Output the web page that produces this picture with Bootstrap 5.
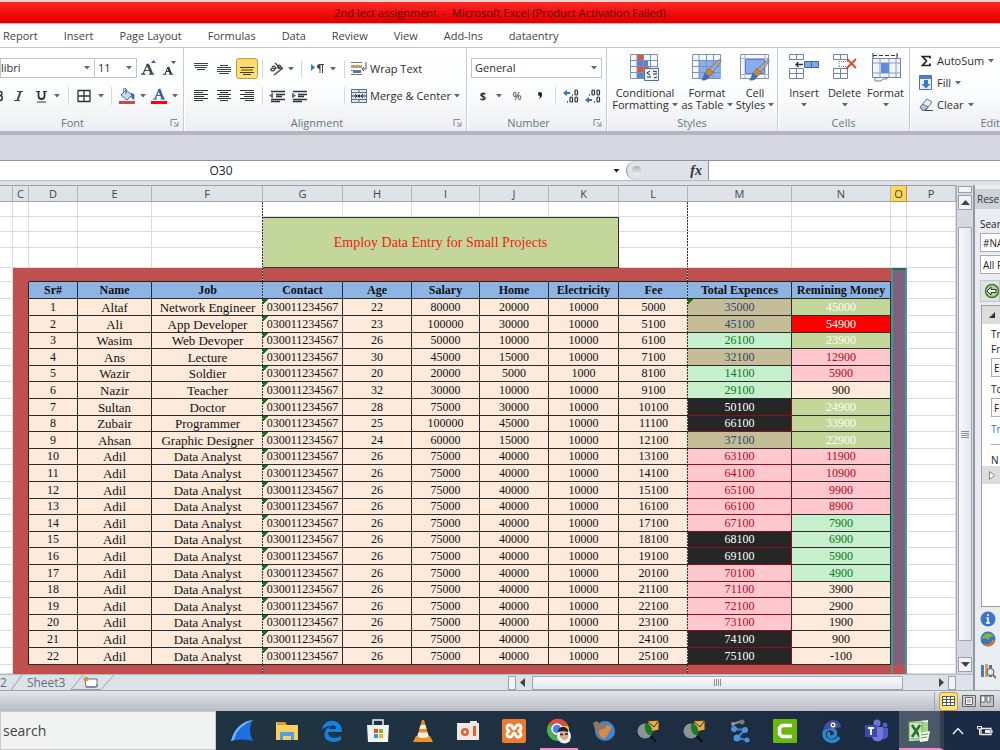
<!DOCTYPE html>
<html lang="en">
<head>
<meta charset="utf-8">
<meta name="viewport" content="width=device-width, initial-scale=1">
<title>2nd lect assignment - Microsoft Excel</title>
<link href="https://cdn.jsdelivr.net/npm/bootstrap@5.3.0/dist/css/bootstrap.min.css" rel="stylesheet">
<style>
body{font-family:"Open Sans","Noto Sans",sans-serif;font-size:11px;line-height:12px;color:#2e2e2e;background:#fff;min-height:100vh;overflow-x:hidden}
button,input,select{font:inherit;color:inherit;border-radius:0}
button{border:0;background:none;padding:0}
svg{display:block;flex:none}
.titlebar{height:24px;background:linear-gradient(#ff2a26,#ee0a0a 60%,#dc0000);border-top:2px solid #f3d3cd;border-bottom:1px solid #f0a39d;color:#5c0505;white-space:pre}
.tabstrip{height:23px;gap:26px;padding-left:3px;background:#fff}
.tabstrip a{color:#444;text-decoration:none}
.ribbon{height:84px;background:linear-gradient(#fff,#fbfcfd 55%,#eceef1);border-top:1px solid #c5c8cc}
.grp{border-right:1px solid #c9ccd1;box-shadow:1px 0 #fff;padding-top:10px;overflow:hidden}
.g-font{width:184px}.g-align{width:283px}.g-num{width:140px}.g-styles{width:171px}.g-cells{width:132px}
.tools{display:grid;height:20px;margin-bottom:8px;align-items:center;justify-items:center}
.caption{height:16px;color:#6b7482;margin-top:auto}
.caption>span{flex:1;text-align:center}
.caption svg{width:16px}
.g-font .caption{margin-left:-22px}
.t-font1{grid-template-columns:95px 42px 23px 20px}
.t-font2{grid-template-columns:6px 25px 20px 12px 10px 22px 11px 10px 22px 9px 23px 10px}
.t-al1{grid-template-columns:22px 23px 23px 8px 22px 6px 14px 19px 12px 10px 1fr;padding-left:6px}
.t-al2{grid-template-columns:22px 23px 23px 8px 22px 22px 29px 10px 1fr;padding-left:6px}
.t-num{grid-template-columns:22px 10px 26px 20px 10px 22px 22px;padding-left:5px}
.sep{width:1px;height:18px;background:#d5d8dc}
.field{height:20px;border:1px solid #c3c6ca;background:#fff;width:100%}
.field input,.field select{border:0;background:none;outline:0;appearance:none;flex:1;min-width:0;padding:0 3px}
.field svg{margin-right:4px}
.pressed{width:22px;height:21px;border:1px solid #c29b3d;border-radius:3px;background:linear-gradient(#fbd96f,#ffe47b);display:flex;align-items:center;justify-content:center}
.wide{justify-self:start;display:flex;align-items:center;gap:3px;padding-left:2px;white-space:nowrap}
.bigs{display:grid;margin-top:-5px}
.t-styles{grid-template-columns:72px 52px 44px;padding-left:2px}
.t-cells{grid-template-columns:40px 41px 41px;padding-left:6px}
.bigs button{display:flex;flex-direction:column;align-items:center;white-space:nowrap}
.bigs button>svg{margin-bottom:4px}
.bigs button span{display:flex;align-items:center;gap:3px;height:12px}
.edits{gap:9px;padding-left:9px;margin-top:-2px}
.edits button{display:flex;align-items:center;gap:4px;height:13px}
.underband{height:29px;border-top:4px solid #b3b6c2;background:#d5d8e1}
.formula{height:21px;border-top:1px solid #8f949c;border-bottom:1px solid #b4b9c1;background:#fff}
.namebox{width:626px}
.namebox input{width:442px;border:0;outline:0;text-align:center;font-size:12px;color:#222;padding:0}
.namebox button{margin-left:auto;padding-right:6px}
.fxzone{width:83px;background:#dfe2e8;border:1px solid #8f949c;border-width:0 1px 0 1px;border-radius:10px 0 0 10px;padding:0 6px 0 5px}
.knob{width:9px;height:9px;border-radius:50%;background:linear-gradient(#a9adb4,#f4f5f7)}
.fx{font:italic bold 14px/16px "Liberation Serif",serif;color:#333}
.formula>input{border:0;outline:0;min-width:0}
.work{background:#e7eaf0;border-top:4px solid #dde1e8}
.sheetpart{min-width:0;overflow:hidden}
.grid{table-layout:fixed;width:100%;border-collapse:separate;border-spacing:0;background:#fff;font-family:"Liberation Serif",serif;font-size:12px;line-height:15px;color:#111;text-align:center;border-top:1px solid #9aa0a9}
.grid td,.grid th{padding:0;border-right:1px solid #dadcdd;border-bottom:1px solid #dadcdd;white-space:nowrap;overflow:hidden}
.grid thead th{height:16px;font:11px/14px "Open Sans",sans-serif;background:#dfe3e8;color:#444;border-color:#9fa5ad;border-right-color:#b0b5bc}
.grid thead .now{background:#ffd65c;border-color:#c2903a}
.w13{width:13px}.w16{width:16px}.w49{width:49px}.w74{width:74px}.w111{width:111px}.w80{width:80px}.w69{width:69px}.w68{width:68px}.w70{width:70px}.w104{width:104px}.w99{width:99px}
.h15 td{height:15px}.h16 td{height:16px}.h20 td{height:20px}.h14 td{height:14px}.h9 td{height:9px}.h17 td{height:17px}
.grid .brk{border-right:0;background-image:repeating-linear-gradient(#333 0 2px,#ddd 2px 3px);background-size:1px 100%;background-position:right;background-repeat:no-repeat}
.grid .banner{background:#c4d79b;color:#f11b0e;font-size:14px;border:1px solid #333;border-left:0}
.grid .brick{background-color:#c0504d;border-color:#c0504d}
.grid .lowedge{border-bottom-color:#222}
.grid .rtedge{border-right-color:#222}
.grid .box{background-color:#fdeada;border-color:#2b2b2b}
.grid .cap{background-color:#8db4e2;font-weight:bold}
.grid .word{font-size:13px}
.grid .flag{background-image:linear-gradient(135deg,#0b7a16 4px,transparent 4px)}
.grid .tan{background-color:#c4bd97;color:#2b4870}
.grid .olive{background-color:#c4d79b;color:#fbfdf2}
.grid .good{background-color:#c6efce;color:#0b7a16}
.grid .bad{background-color:#ffc7ce;color:#b30a1c}
.grid .coal{background-color:#262626;color:#fff}
.grid .alarm{background-color:#f00;color:#fff}
.grid .wine{border-color:#8b0f18}
.grid .sel{background:#80607a;border:0 solid #3f9a9b;border-width:0 2px}
.grid .seltop{border-top:2px solid #23686c}
.grid .selend{background:#c0504d}
.vbar{flex:none;width:17px;background:#d6dae0;border-left:1px solid #a9aeb6;padding:1px 1px 2px;gap:2px}
.sbtn{flex:none;border:1px solid #9ba1aa;background:#f1f3f6;display:flex;align-items:center;justify-content:center}
.vthumb{margin:15px 0 14px;flex:1;background:linear-gradient(90deg,#f8f9fb,#e3e7ed);border:1px solid #a0a6af;border-radius:1px}
.tabrow{height:16px;background:#dce2e8;border-top:1px solid #b5bac2}
.hbar{width:46%}
.hthumb{flex:1;margin:0 36px 0 7px;align-self:stretch;background:linear-gradient(#f8f9fb,#e3e7ed);border:1px solid #a0a6af}
.sheetlink{color:#666e7a;text-decoration:none;font-size:12px}
.pane{flex:none;width:27px;overflow:hidden;border-left:2px solid #9299a3;background:#e9ecf1;color:#222;white-space:nowrap;font-size:10px}
.panehead{height:20px;margin-top:4px;background:#cdd2d9;color:#333;padding:4px 0 0 2px}
.cut{display:block;height:19px;border:1px solid #a9adb3;border-right:0;background:#fff;width:100%;padding:0 0 0 2px;appearance:none;outline:0}
.panebody{padding-left:5px}
.s3{margin-top:3px}.s6{margin-top:6px}.s9{margin-top:9px}
.back{display:block;width:100%;height:22px;border:1px solid #c2c6cc;background:#e1e1e3;padding-left:2px}
.results{margin:3px 0 0 6px;height:302px;background:#fff;border:1px solid #9b9fa6;border-right:0}
.results .strip{height:18px;background:#dcdcdc;display:flex;align-items:center;padding-left:7px}
.results .inner{padding-left:9px}
.rule{border-top:1px solid #aaa;padding-top:9px}
.status{height:21px;background:linear-gradient(#e3e6ea,#b9bdc4);border-top:1px solid #9fa4ac;gap:4px;padding-right:6px}
.status .on{width:19px;height:19px;border:1px solid #c29b3d;border-radius:3px;background:#ffe07a}
.task{background:linear-gradient(90deg,#20373f,#1e2f42 60%,#1b2a44);min-height:39px}
.task .find{width:216px;border:1px solid #c9c9c9;background:#f1f2f2;font-size:14px;color:#444;padding:0 2px;outline:0}
.task .find::placeholder{color:#444;opacity:1}
.apps{display:grid;grid-template-columns:repeat(16,minmax(0,1fr));margin-left:3px}
.apps button{display:flex;align-items:center;justify-content:center;padding-top:2px;border-bottom:2px solid transparent}
.apps .live{background:#4b5867;border-bottom-color:#ee8ccb;border-right:4px solid #333e50}
.apps .run{border-image:linear-gradient(90deg,transparent 10%,#ee8ccb 10% 90%,transparent 90%) 1}
.tray{width:56px;gap:12px}
</style>
</head>
<body class="d-flex flex-column">
<svg width="0" height="0" class="position-absolute" aria-hidden="true">
<defs>
<symbol id="dn" viewBox="0 0 6 4"><path d="M0 0h6L3 3.600z" fill="#666"/></symbol>
<symbol id="launch" viewBox="0 0 16 8"><path d="M4 7V.5h6M7 3l3.500 3.500M11 3v4H7" fill="none" stroke="#858b95"/></symbol>
<symbol id="brush" viewBox="0 0 22 24"><path d="M20 0c2 1 1 3 0 4l-8 10-4-3z" fill="#a8a8a8" stroke="#666" stroke-width=".7"/><path d="M8 10l5 4-4 4-5-3z" fill="#c98a3c" stroke="#76502a" stroke-width=".6"/><path d="M4 15l5 3c-2 4-5 5-9 4 3-2 2-5 4-7z" fill="#3c6fc0"/></symbol>
<symbol id="searchy" viewBox="0 0 24 24"><circle cx="8" cy="12" r="7.500" fill="#8d9494"/><path d="M10 2l12-1v10L13 13z" fill="#e3b04d" stroke="#3a2f19"/><path d="M10 2l7 6 5-7" fill="none" stroke="#3a2f19"/><path d="M8 5c5-1 8 4 7 11-4 1-8-3-7-11z" fill="#177a25"/><path d="M14 17l5 6" stroke="#111" stroke-width="2"/></symbol>
</defs></svg>

<header>
<div class="titlebar d-flex align-items-center justify-content-center">2nd lect assignment  -  Microsoft Excel (Product Activation Failed)</div>
<nav class="tabstrip d-flex align-items-center" aria-label="Ribbon tabs">
<a href="#">Report</a><a href="#">Insert</a><a href="#">Page Layout</a><a href="#">Formulas</a><a href="#">Data</a><a href="#">Review</a><a href="#">View</a><a href="#">Add-Ins</a><a href="#">dataentry</a>
</nav>
<div class="ribbon d-flex">
<section class="grp g-font d-flex flex-column">
<div class="tools t-font1">
<div class="field d-flex align-items-center"><input value="libri" aria-label="Font" class="ps-0"><svg width="6" height="4"><use href="#dn"/></svg></div>
<div class="field d-flex align-items-center border-start-0"><select aria-label="Font size"><option>11</option></select><svg width="6" height="4"><use href="#dn"/></svg></div>
<button aria-label="Grow font"><svg width="16" height="16" viewBox="0 0 16 16"><path d="M2 14L6.500 4" stroke="#444" stroke-width="1.200"/><path d="M6.500 4L11 14" stroke="#444" stroke-width="2.600"/><path d="M3.500 10.500h6M0 14.200h4.500M8 14.200h5" stroke="#444" stroke-width="1.200"/><path d="M10 3h5l-2.500-3z" fill="#35589c"/></svg></button>
<button aria-label="Shrink font"><svg width="14" height="16" viewBox="0 0 14 16"><path d="M2 14L5 7" stroke="#333"/><path d="M5 7l3 7" stroke="#333" stroke-width="2.200"/><path d="M3 11.500h4M0 14.200h3.500M6 14.200h4" stroke="#333"/><path d="M8 1h5l-2.500 3z" fill="#35589c"/></svg></button>
</div>
<div class="tools t-font2">
<button aria-label="Bold" class="overflow-hidden"><svg width="6" height="12" viewBox="0 0 6 12"><path d="M-3 1.500h3c2.500 0 2.500 4 0 4h-3M0 5.500c3 0 3 5 0 5h-3" fill="none" stroke="#333" stroke-width="1.500"/></svg></button>
<button aria-label="Italic"><svg width="10" height="12" viewBox="0 0 10 12"><path d="M3 1.500h6M0 10.500h6" stroke="#444"/><path d="M6.500 1.500l-3 9" stroke="#444" stroke-width="2"/></svg></button>
<button aria-label="Underline"><svg width="11" height="13" viewBox="0 0 11 13"><path d="M0 1.500h4M7 1.500h4M1 12h9" stroke="#333"/><path d="M2.500 1v5c0 4 6 4 6 0V1" fill="none" stroke="#333" stroke-width="1.800"/></svg></button>
<svg width="6" height="4"><use href="#dn"/></svg><i class="sep"></i>
<button aria-label="Borders"><svg width="14" height="14" viewBox="0 0 14 14"><path d="M1 1.500h12v11H1zM7 1v12M1 7h12" fill="none" stroke="#333" stroke-width="1.300"/></svg></button>
<svg width="6" height="4"><use href="#dn"/></svg><i class="sep"></i>
<button aria-label="Fill colour"><svg width="16" height="16" viewBox="0 0 16 16"><path d="M7 2l6 5-5 5-6-5z" fill="#c9d9f0" stroke="#51617c"/><path d="M7 6V1c-2-2-3 0-2 3" fill="none" stroke="#51617c"/><path d="M12 5c4 0 4 3 3 7-2-1-3-2-3-5z" fill="#3a6fbd"/><path d="M0 13h16v3H0z" fill="#c0504d"/></svg></button>
<svg width="6" height="4"><use href="#dn"/></svg>
<button aria-label="Font colour"><svg width="16" height="16" viewBox="0 0 16 16"><path d="M4 11L8 1.500" stroke="#3d5e9a" stroke-width="1.300"/><path d="M8 1l4 10" stroke="#3d5e9a" stroke-width="2.600"/><path d="M5.500 7.500h5M2 11h4M9.500 11H14" stroke="#3d5e9a" stroke-width="1.200"/><path d="M0 13h16v3H0z" fill="#f00"/></svg></button>
<svg width="6" height="4"><use href="#dn"/></svg>
</div>
<div class="caption d-flex align-items-center"><span>Font</span><svg height="8"><use href="#launch"/></svg></div>
</section>

<section class="grp g-align d-flex flex-column">
<div class="tools t-al1">
<button aria-label="Top align"><svg width="14" height="12" viewBox="0 0 14 12"><path d="M0 .5h14M0 2.500h14M1 4.500h12M3 6.500h8" stroke="#444"/></svg></button>
<button aria-label="Middle align"><svg width="14" height="12" viewBox="0 0 14 12"><path d="M3 2.500h8M0 4.500h14M0 6.500h14M0 8.500h14M2 10.500h10" stroke="#444"/></svg></button>
<button class="pressed" aria-label="Bottom align"><svg width="14" height="12" viewBox="0 0 14 12"><path d="M0 4.500h14M1 7h12M0 9.500h14M3 11.500h8" stroke="#443a1c"/></svg></button>
<i class="sep"></i>
<button aria-label="Orientation"><svg width="16" height="14" viewBox="0 0 16 14"><path d="M3 5c2-2 4 0 4 2M6 7c-1 3-5 2-4 0 1-1 3-1 4 0M6 1l5 5M9 4c1-2 4 0 2 2-1 1-3 0-2-2M5 13L14 6M14 6h-3" fill="none" stroke="#444" stroke-width="1.400"/></svg></button>
<svg width="6" height="4"><use href="#dn"/></svg><i class="sep"></i>
<button aria-label="Text direction"><svg width="13" height="11" viewBox="0 0 13 11"><path d="M0 1v7l4-3.500z" fill="#4674b8"/><path d="M8 1.500H13M9 1v9M11.500 1v9" stroke="#444"/><path d="M9 1C5 1 5 6 9 6z" fill="#444"/></svg></button>
<svg width="6" height="4"><use href="#dn"/></svg><i class="sep"></i>
<button class="wide"><svg width="16" height="15" viewBox="0 0 16 15"><path d="M0 1.500h11M0 13.500h11M0 9.500h10" stroke="#777"/><path d="M0 4h11v3H0z" fill="#d39b63"/><path d="M2 11h8" stroke="#4d79b8" stroke-width="2"/><path d="M15 1v7h-4M13 6l-2 2 2 2" fill="none" stroke="#43546f"/></svg>Wrap Text</button>
</div>
<div class="tools t-al2">
<button aria-label="Align left"><svg width="14" height="12" viewBox="0 0 14 12"><path d="M0 .5h14M0 2.500h9M0 4.500h14M0 6.500h10M0 8.500h14M0 10.500h9" stroke="#333"/></svg></button>
<button aria-label="Centre"><svg width="14" height="12" viewBox="0 0 14 12"><path d="M0 .5h14M3 2.500h8M0 4.500h14M2 6.500h10M0 8.500h14M3 10.500h8" stroke="#333"/></svg></button>
<button aria-label="Align right"><svg width="14" height="12" viewBox="0 0 14 12"><path d="M0 .5h14M5 2.500h9M0 4.500h14M4 6.500h10M0 8.500h14M5 10.500h9" stroke="#333"/></svg></button>
<i class="sep"></i>
<button aria-label="Decrease indent"><svg width="16" height="13" viewBox="0 0 16 13"><path d="M2 1.500h14M7 4.500h9M7 6.500h6M2 9.500h14M2 11.500h9" stroke="#333" stroke-width="1.400"/><path d="M0 5.500L4 2.500v6z" fill="#3f74bd"/></svg></button>
<button aria-label="Increase indent"><svg width="16" height="13" viewBox="0 0 16 13"><path d="M2 1.500h14M7 4.500h9M7 6.500h6M2 9.500h14M2 11.500h9" stroke="#333" stroke-width="1.400"/><path d="M5 5.500L1 2.500v6z" fill="#3f74bd"/></svg></button>
<span></span><i class="sep"></i>
<button class="wide"><svg width="16" height="14" viewBox="0 0 16 14"><path d="M.5.500h15v13H.5z" fill="#dfe9f7" stroke="#53709b"/><path d="M0 3.500h16M0 10.500h16M8 0v3M8 11v3" stroke="#53709b"/><path d="M1 7h4M15 7h-4M4 5l2 2-2 2M12 5l-2 2 2 2" stroke="#222" fill="none"/><circle cx="8" cy="7" r="1.500" fill="#222"/></svg>Merge &amp; Center<svg width="6" height="4"><use href="#dn"/></svg></button>
</div>
<div class="caption d-flex align-items-center"><span>Alignment</span><svg height="8"><use href="#launch"/></svg></div>
</section>

<section class="grp g-num d-flex flex-column">
<div class="tools ps-1 pe-1"><div class="field d-flex align-items-center"><select aria-label="Number format"><option>General</option></select><svg width="6" height="4"><use href="#dn"/></svg></div></div>
<div class="tools t-num">
<button class="fw-bold">$</button><svg width="6" height="4"><use href="#dn"/></svg><button>%</button>
<button aria-label="Comma style"><svg width="6" height="10" viewBox="0 0 6 10"><circle cx="3" cy="3" r="2" fill="#222"/><path d="M5 3c0 3-1 4-3 5 1-2 1-3 1-4z" fill="#222"/></svg></button><i class="sep"></i>
<button aria-label="Increase decimal"><svg width="16" height="14" viewBox="0 0 16 14"><path d="M0 4l4-3v2h3v2H4v2z" fill="#3f6db5"/><path d="M9 6h1M4 13h1" stroke="#333" stroke-width="1.500"/><g fill="none" stroke="#333" stroke-width="1.200"><rect x="12" y="1" width="2.500" height="5" rx="1"/><rect x="7" y="8" width="2.500" height="5" rx="1"/><rect x="12" y="8" width="2.500" height="5" rx="1"/></g></svg></button>
<button aria-label="Decrease decimal"><svg width="16" height="14" viewBox="0 0 16 14"><path d="M7 11L3 8v2H0v2h3v2z" fill="#3f6db5" transform="matrix(-1 0 0 1 7 0)"/><path d="M4 6h1M9 13h1" stroke="#333" stroke-width="1.500"/><g fill="none" stroke="#333" stroke-width="1.200"><rect x="7" y="1" width="2.500" height="5" rx="1"/><rect x="12" y="1" width="2.500" height="5" rx="1"/><rect x="12" y="8" width="2.500" height="5" rx="1"/></g></svg></button>
</div>
<div class="caption d-flex align-items-center"><span>Number</span><svg height="8"><use href="#launch"/></svg></div>
</section>

<section class="grp g-styles d-flex flex-column">
<div class="bigs t-styles">
<button><svg width="30" height="30" viewBox="0 0 30 30"><path d="M.5 1.500h27v24H.5z" fill="#f4f7fb" stroke="#7e92b0"/><path d="M7 2h6v5H7zM7 13h12v6H7z" fill="#e0543a"/><path d="M7 8h11v5H7zM7 20h6v5H7z" fill="#5b82d8"/><path d="M1 7.500h26M1 13.500h26M1 19.500h26M7 2v23M13.500 2v23M20.500 2v23" stroke="#7e92b0"/><path d="M14.500 15.500h14v12h-14z" fill="#eef3fa" stroke="#51719d"/><path d="M20 18l-3 2 3 2M17 24h4M23 18l4 1M23 21h4M24 25l3-1" stroke="#222" fill="none"/></svg><span>Conditional</span><span>Formatting <svg width="6" height="4"><use href="#dn"/></svg></span></button>
<button><svg width="30" height="30" viewBox="0 0 30 30"><path d="M.5 1.500h28v24H.5z" fill="#f4f7fb" stroke="#7e92b0"/><path d="M7 8h22v17H7z" fill="#86aef0"/><path d="M1 7.500h27M1 13.500h27M1 19.500h27M7 2v23M14.500 2v23M21.500 2v23" stroke="#7e92b0"/><use href="#brush" x="9" y="6" width="21" height="23"/></svg><span>Format</span><span>as Table <svg width="6" height="4"><use href="#dn"/></svg></span></button>
<button><svg width="30" height="30" viewBox="0 0 30 30"><path d="M.5 1.500h28v24H.5z" fill="#f4f7fb" stroke="#7e92b0"/><path d="M1 5.500h27M1 21.500h27M5 2v23M25 2v23" stroke="#a9b7cb"/><path d="M5.500 6.500h19v14h-19z" fill="#86aef0" stroke="#5b7fc0"/><use href="#brush" x="9" y="6" width="21" height="23"/></svg><span>Cell</span><span>Styles <svg width="6" height="4"><use href="#dn"/></svg></span></button>
</div>
<div class="caption d-flex align-items-center"><span>Styles</span></div>
</section>

<section class="grp g-cells d-flex flex-column">
<div class="bigs t-cells">
<button><svg width="30" height="30" viewBox="0 0 30 30"><path d="M.5 1.500h14v5H.5zM7.500 1.500v5M.5 15.500h14v10H.5zM.5 20.500h14M7.500 15.500v10" fill="#fff" stroke="#7384a0"/><path d="M15.500 8.500h14v6h-14z" fill="#7fa8ea" stroke="#3d64a8"/><path d="M22.500 9v6" stroke="#3d64a8"/><path d="M14 11.500H7M9.500 9L7 11.500 9.500 14" fill="none" stroke="#333" stroke-width="1.400"/></svg><span>Insert</span><span><svg width="6" height="4"><use href="#dn"/></svg></span></button>
<button><svg width="30" height="30" viewBox="0 0 30 30"><path d="M3.500 1.500h14v5h-14zM10.500 1.500v5M3.500 15.500h14v10h-14zM3.500 20.500h14M10.500 15.500v10" fill="#fff" stroke="#7384a0"/><path d="M9 8.500h9M9 13.500h9M9 8v6" stroke="#7384a0" stroke-dasharray="1 1"/><path d="M17 6l9 9M26 6l-10 10" stroke="#e2492f" stroke-width="2"/></svg><span>Delete</span><span><svg width="6" height="4"><use href="#dn"/></svg></span></button>
<button><svg width="30" height="30" viewBox="0 0 30 30"><path d="M1.500 5.500h28v19h-28zM4 25v3h6l2-2h4v-2" fill="#f1f5fb" stroke="#7384a0"/><path d="M2 10h27M2 20h27M9 6v18M18 6v18M25 6v18" stroke="#8d9db8"/><path d="M10 10h8v10h-8z" fill="#5e8de0"/><path d="M2 2.500h25" stroke="#333" stroke-dasharray="4 2"/><path d="M2 0v5M26 0v5" stroke="#333"/></svg><span>Format</span><span><svg width="6" height="4"><use href="#dn"/></svg></span></button>
</div>
<div class="caption d-flex align-items-center"><span>Cells</span></div>
</section>

<section class="d-flex flex-column flex-grow-1 overflow-hidden pt-2">
<div class="edits d-flex flex-column align-items-start">
<button><svg width="14" height="12" viewBox="0 0 14 12"><path d="M11 3.500V1.500H3.500L7.500 6l-4 4.500H11v-2" fill="none" stroke="#222" stroke-width="1.700"/></svg>AutoSum<svg width="6" height="4"><use href="#dn"/></svg></button>
<button><svg width="14" height="15" viewBox="0 0 14 15"><path d="M.5.500h12v14H.5z" fill="#e9f1fc" stroke="#4e72ac"/><path d="M1 1h11v3H1z" fill="#4c7fd0"/><path d="M5 5h4v4h2.500L7 13.500 2.500 9H5z" fill="#3f74c8"/></svg>Fill<svg width="6" height="4"><use href="#dn"/></svg></button>
<button><svg width="14" height="13" viewBox="0 0 14 13"><path d="M8 1l5 3-6 8H3L1 9z" fill="#e9edf5" stroke="#68758d"/><path d="M1 9l3-3 5 3-3 3H3z" fill="#b9c5da" stroke="#68758d"/><path d="M6 12.500h8" stroke="#444"/></svg>Clear<svg width="6" height="4"><use href="#dn"/></svg></button>
</div>
<div class="caption d-flex align-items-center justify-content-end">Edit</div>
</section>
</div>
<div class="underband"></div>
<div class="formula d-flex">
<div class="namebox d-flex align-items-center"><input value="O30" aria-label="Name box"><button aria-label="Names"><svg width="7" height="4" viewBox="0 0 6 4"><path d="M0 0h6L3 3.600z" fill="#222"/></svg></button></div>
<div class="fxzone d-flex align-items-center justify-content-between"><span class="knob"></span><button class="fx">fx</button></div>
<input class="flex-grow-1" aria-label="Formula">
</div>
</header>

<main class="work d-flex flex-grow-1">
<div class="sheetpart d-flex flex-column flex-grow-1">
<div class="d-flex flex-grow-1">
<div class="sheetpart flex-grow-1 bg-white">
<table class="grid">
<colgroup><col class="w13"><col class="w16"><col class="w49"><col class="w74"><col class="w111"><col class="w80"><col class="w69"><col class="w68"><col class="w69"><col class="w70"><col class="w69"><col class="w104"><col class="w99"><col class="w16"><col></colgroup>
<thead><tr><th></th><th>C</th><th>D</th><th>E</th><th>F</th><th>G</th><th>H</th><th>I</th><th>J</th><th>K</th><th>L</th><th>M</th><th>N</th><th class="now">O</th><th>P</th></tr></thead>
<tbody id="cells"></tbody>
</table>
</div>
<div class="vbar d-flex flex-column">
<span class="sbtn" style="height:7px"></span>
<button class="sbtn" style="height:15px" aria-label="Scroll up"><svg width="9" height="5" viewBox="0 0 9 5"><path d="M0 5h9L4.500 0z" fill="#444"/></svg></button>
<div class="vthumb d-flex align-items-center justify-content-center"><svg width="8" height="7" viewBox="0 0 8 7"><path d="M0 .5h8M0 2.500h8M0 4.500h8M0 6.500h8" stroke="#8b9099"/></svg></div>
<button class="sbtn" style="height:15px" aria-label="Scroll down"><svg width="9" height="5" viewBox="0 0 9 5"><path d="M0 0h9L4.500 5z" fill="#444"/></svg></button>
</div>
</div>
<div class="tabrow d-flex align-items-center">
<a href="#" class="sheetlink">2</a>
<svg width="12" height="15" viewBox="0 0 12 15" class="ms-1"><path d="M0 15L11 0" stroke="#9aa1ab"/></svg>
<a href="#" class="sheetlink ps-1">Sheet3</a>
<svg width="48" height="15" viewBox="0 0 48 15" class="ms-1"><path d="M2 14.500L14 0M32 14.500L45 0M2 14.500h30" fill="none" stroke="#9aa1ab"/><path d="M16 4h12v8H17z" fill="#fff" stroke="#5d7090"/><path d="M17 12h9l3-3" stroke="#5d7090" fill="none"/><path d="M17 1v6M14 4h6M15 2l4 4M19 2l-4 4" stroke="#e08a2c"/></svg>
<div class="hbar ms-auto d-flex align-items-center">
<span class="sbtn" style="width:8px;height:14px"></span>
<button class="ms-1" aria-label="Scroll left"><svg width="5" height="9" viewBox="0 0 5 9"><path d="M5 0v9L0 4.500z" fill="#444"/></svg></button>
<div class="hthumb d-flex align-items-center justify-content-center"><svg width="8" height="7" viewBox="0 0 8 7"><path d="M.5 0v7M2.500 0v7M4.500 0v7M6.500 0v7" stroke="#8b9099"/></svg></div>
<button class="me-1" aria-label="Scroll right"><svg width="5" height="9" viewBox="0 0 5 9"><path d="M0 0v9l5-4.500z" fill="#444"/></svg></button>
<span class="sbtn" style="width:8px;height:14px"></span>
</div>
<span style="width:17px"></span>
</div>
</div>
<aside class="pane">
<div class="panehead">Rese</div>
<div class="panebody">
<label for="q" class="d-block s9">Sear</label>
<input id="q" class="cut s3" value="#NA">
<select class="cut s3" aria-label="Source"><option>All R</option></select>
<button aria-label="Back" class="back s6"><svg width="16" height="20" viewBox="0 0 16 20"><circle cx="9" cy="10" r="6.500" fill="#a9da92" stroke="#3f7a35" stroke-width="1.500"/><path d="M4 10l4-4v2.500h5v3H8V14z" fill="#fff" stroke="#333"/></svg></button>
</div>
<div class="results">
<div class="strip"><svg width="6" height="6" viewBox="0 0 6 6"><path d="M6 0v6H0z" fill="#333"/></svg></div>
<div class="inner">
<div class="pt-1">Tr</div>
<label for="lf" class="d-block s3">Fr</label>
<select id="lf" class="cut s3"><option>E</option></select>
<label for="lt" class="d-block s6">To</label>
<select id="lt" class="cut s3"><option>F</option></select>
<a href="#" class="d-block text-decoration-none s6">Tr</a>
<div class="rule s9">N</div>
</div>
<div class="strip"><svg width="6" height="9" viewBox="0 0 6 9"><path d="M.5.500v8l5-4z" fill="#fff" stroke="#888"/></svg></div>
</div>
<div class="panebody pt-1">
<svg width="16" height="16" viewBox="0 0 16 16" class="mb-1"><circle cx="8" cy="8" r="7.500" fill="#3c74cd"/><path d="M8 3v2M6.500 7H8v5M6 12h4" stroke="#fff" stroke-width="1.600" fill="none"/></svg>
<svg width="16" height="16" viewBox="0 0 16 16" class="mb-3"><circle cx="8" cy="8" r="7.500" fill="#3878b8"/><path d="M1 8c3-6 8-8 13-3-3 0-5 1-6 4-2-2-4-2-7-1z" fill="#7fb446"/><path d="M2 12c5 3 9 1 10-3h3c-1 6-8 9-13 3z" fill="#e2762a"/></svg>
<svg width="16" height="16" viewBox="0 0 16 16"><path d="M1 2h3v12H1z" fill="#4c78c4"/><path d="M5 1h3v13H5z" fill="#d39b63"/><path d="M9 2h3v12H9z" fill="#5c6f92"/><circle cx="10.500" cy="9" r="3.500" fill="#dcebfa" stroke="#555"/><path d="M13 12l3 3" stroke="#8a6a3a" stroke-width="2"/></svg>
</div>
</aside>
</main>

<footer>
<div class="status d-flex align-items-center justify-content-end">
<i class="sep bg-secondary opacity-50"></i>
<button class="on d-flex align-items-center justify-content-center" aria-label="Normal view"><svg width="13" height="11" viewBox="0 0 13 11"><path d="M.5.500h12v9H.5zM0 3.500h13M0 6.500h13M4.500 0v10M8.500 0v10" fill="#fff" stroke="#555"/></svg></button>
<button aria-label="Page layout view"><svg width="14" height="12" viewBox="0 0 14 12"><path d="M.5.500h13v11H.5z" fill="#c9ccd1" stroke="#666"/><path d="M3.500 2.500h7v7h-7z" fill="#fff" stroke="#666"/><path d="M5 5h4M5 7h4" stroke="#888"/></svg></button>
<button aria-label="Page break view"><svg width="14" height="12" viewBox="0 0 14 12"><path d="M.5.500h13v11H.5z" fill="#c0c3c8" stroke="#666"/><path d="M1 1h4v6H1zM7 1h3v6H7z" fill="#fff" stroke="#666"/></svg></button>
</div>
<div class="task d-flex">
<input class="find" placeholder="search" aria-label="Search">
<div class="apps flex-grow-1">
<button aria-label="Wireshark"><svg width="24" height="24" viewBox="0 0 24 24"><path d="M1 22C4 10 12 2 23 1c-4 6-4 14 0 21-8-2-15-2-22 0z" fill="#1c6fe0"/><path d="M1 22C4 10 12 2 23 1 12 6 6 12 4 21z" fill="#78b2f2"/></svg></button>
<button aria-label="File Explorer"><svg width="22" height="20" viewBox="0 0 22 20"><path d="M0 1h9l2 3h11v15H0z" fill="#f7cf62"/><path d="M1 1h8l1 3H1z" fill="#df9a2b"/><path d="M4 11h14v8h-3v-4H7v4H4z" fill="#4e9fe0"/></svg></button>
<button aria-label="Edge"><svg width="22" height="22" viewBox="0 0 22 22"><path d="M1 10C2-2 21-3 21 12H7c0 7 8 7 13 4v4C11 25 1 20 4 12c1-4 4-5 6-6-5 0-7 2-9 4zM8 9h7c0-5-6-5-7 0z" fill="#1283e0" fill-rule="evenodd"/></svg></button>
<button aria-label="Store"><svg width="24" height="24" viewBox="0 0 24 24"><path d="M7 7V1h10v6" fill="none" stroke="#eee" stroke-width="1.500"/><path d="M1 6h22l-1 17H2z" fill="#f3f3f3"/><path d="M8 10h4v4H8z" fill="#e8532c"/><path d="M13 10h4v4h-4z" fill="#7fb92c"/><path d="M8 15h4v4H8z" fill="#2a9be0"/><path d="M13 15h4v4h-4z" fill="#f4b51c"/></svg></button>
<button aria-label="VLC"><svg width="20" height="22" viewBox="0 0 20 22"><path d="M3 16h14l3 6H0z" fill="#f09124"/><path d="M9 0h2l5 17c-3 3-9 3-12 0z" fill="#ef8a1e"/><path d="M7.600 5h4.800l1.200 4H6.400zM5.300 12.500h9.400l1 4c-3 2-8 2-11.400 0z" fill="#f6efe6"/></svg></button>
<button aria-label="Recorder"><svg width="22" height="20" viewBox="0 0 22 20"><path d="M0 2h13V0h7v2h2v17H0z" fill="#eee9e4"/><circle cx="8" cy="11" r="4" fill="#e4602e"/><circle cx="8" cy="11" r="1.500" fill="#eee"/><path d="M16 5h3v10h-3z" fill="#e4602e"/></svg></button>
<button aria-label="XAMPP"><svg width="24" height="24" viewBox="0 0 24 24"><rect width="24" height="24" rx="2" fill="#ef7b2d"/><path d="M8 6c-4 0-4 5 0 6-4 1-4 6 0 6 3 0 2-4 4-4s1 4 4 4c4 0 4-5 0-6 4-1 4-6 0-6-3 0-2 4-4 4s-1-4-4-4z" fill="none" stroke="#fff" stroke-width="2.800"/></svg></button>
<button class="run" aria-label="Chrome"><svg width="26" height="26" viewBox="0 0 26 26"><circle cx="12" cy="12" r="11" fill="#4caf50"/><path d="M2 7C7-2 19-1 22 8H12z" fill="#e24a3b"/><path d="M22 8c3 6-1 14-9 15l4-11-4-4z" fill="#f4c531"/><circle cx="11" cy="11" r="5" fill="#4385f0" stroke="#fff" stroke-width="1.500"/><circle cx="18" cy="18" r="7" fill="#ececf0"/><path d="M14 14l8-1v7l-4 3-4-4z" fill="#dca98a"/><path d="M12 14c0-7 11-6 10 0-3-1-6-1-10 0z" fill="#222"/><path d="M14 16.500h3M19 16h3" stroke="#222" stroke-width="1.600"/><path d="M14 24l1-3 5 2 4-2v2c-3 3-7 3-10 1z" fill="#eee"/></svg></button>
<button aria-label="Globe browser"><svg width="24" height="24" viewBox="0 0 24 24"><circle cx="13" cy="12" r="10" fill="#3f86cf"/><path d="M6 9c4-4 12-4 14 0-3 2-2 4-4 6-1 3-4 6-6 4-2-3-5-5-4-10z" fill="#dd8a44"/><path d="M1 4l4-2 3 3 4-2 3 4-3 3-4 1-2 3-3-3z" fill="#8b7a6a"/></svg></button>
<button aria-label="Mail search"><svg width="24" height="24"><use href="#searchy"/></svg></button>
<button aria-label="Mail search 2"><svg width="24" height="24"><use href="#searchy"/></svg></button>
<button aria-label="Network tool"><svg width="22" height="24" viewBox="0 0 22 24"><path d="M4 5l9-3" stroke="#8c9297" stroke-width="2"/><circle cx="4" cy="5" r="2" fill="#8c9297"/><circle cx="13" cy="3" r="2.500" fill="#777"/><path d="M5 10l11 1-8 8 10 2" fill="none" stroke="#3f83d0" stroke-width="2"/><circle cx="5" cy="10" r="3" fill="#4a93e0"/><circle cx="16" cy="11" r="3" fill="#4a93e0"/><circle cx="8" cy="19" r="3.500" fill="#4a93e0"/><circle cx="18" cy="21" r="2.500" fill="#4a93e0"/></svg></button>
<button aria-label="Camtasia"><svg width="24" height="24" viewBox="0 0 24 24"><rect width="24" height="24" rx="1" fill="#69b80e"/><path d="M19 6.500H9L6.500 9v6L9 17.500h10" fill="none" stroke="#fff" stroke-width="3.500"/></svg></button>
<button aria-label="Chameleon"><svg width="22" height="24" viewBox="0 0 22 24"><path d="M19 18c-3 7-15 5-15-3 0-5 6-7 10-4 3 3 1 7-2 7-3 1-5-3-2-4" fill="none" stroke="#2a88c8" stroke-width="3.500"/><path d="M3 12C4 5 9 1 13 1c5 0 8 4 8 7-5 2-11 0-18 4z" fill="#4350a8"/><circle cx="13" cy="6" r="2.500" fill="#fff"/><circle cx="13" cy="6" r="1" fill="#222"/></svg></button>
<button aria-label="Teams"><svg width="25" height="24" viewBox="0 0 25 24"><circle cx="13" cy="4" r="3.500" fill="#6d77d8"/><circle cx="21" cy="6" r="2.500" fill="#5460c4"/><path d="M16 9h8v8c-2 4-6 4-8 1z" fill="#4f5bc0"/><path d="M8 8h11v9c0 7-10 7-11 1z" fill="#6f79dc"/><path d="M1 6h12v12H1z" fill="#4049b0"/><path d="M4 9h6M7 9v7" stroke="#fff" stroke-width="1.800"/></svg></button>
<button class="live" aria-label="Excel"><svg width="22" height="22" viewBox="0 0 22 22"><path d="M1 2l19-2v20L1 21z" fill="#e6f3df"/><path d="M13 2h7v17h-7z" fill="#a6d48c"/><path d="M1 2h13v17H1z" fill="#cfe6bf" stroke="#6ba659"/><path d="M4 5l8 12M12 5L4 17" stroke="#25733a" stroke-width="2.600"/><path d="M11 13l11-2-2 10-8 1z" fill="#eff7ea"/><path d="M13 15l7-1M13 18l6-1" stroke="#58a04f"/></svg></button>
</div>
<div class="tray d-flex align-items-center ps-2">
<svg width="12" height="8" viewBox="0 0 12 8"><path d="M1 7l5-5.500L11 7" fill="none" stroke="#eee" stroke-width="1.500"/></svg>
<svg width="17" height="12" viewBox="0 0 17 12"><path d="M5 3.500h10v6H5z" fill="none" stroke="#eee" stroke-width="1.300"/><path d="M9 5h5v3H9z" fill="#eee"/><path d="M16 5v3M1 1.500h5M1.500 1v3h4V1M3.500 4v6" stroke="#eee" fill="none"/></svg>
</div>
</div>
</footer>

<script>
// Sheet records: name, job, age, salary, home, electricity, fee, expenses, style, remaining, style
const people = [
 ['Altaf','Network Engineer',22,80000,20000,10000,5000,35000,'tan',45000,'olive'],
 ['Ali','App Developer',23,100000,30000,10000,5100,45100,'tan',54900,'alarm'],
 ['Wasim','Web Devoper',26,50000,10000,10000,6100,26100,'good',23900,'olive'],
 ['Ans','Lecture',30,45000,15000,10000,7100,32100,'tan',12900,'bad'],
 ['Wazir','Soldier',20,20000,5000,1000,8100,14100,'good',5900,'bad'],
 ['Nazir','Teacher',32,30000,10000,10000,9100,29100,'good',900,''],
 ['Sultan','Doctor',28,75000,30000,10000,10100,50100,'coal wine',24900,'olive'],
 ['Zubair','Programmer',25,100000,45000,10000,11100,66100,'coal wine',33900,'olive'],
 ['Ahsan','Graphic Designer',24,60000,15000,10000,12100,37100,'tan',22900,'olive']
];
for (let i = 0; i < 13; i++) {
  const dark = [5, 6, 11, 12].includes(i);
  people.push(['Adil','Data Analyst',26,75000,40000,10000,13100 + i * 1000,63100 + i * 1000,
    dark ? 'coal wine' : 'bad wine', [11900,10900,9900,8900,7900,6900,5900,4900,3900,2900,1900,900,-100][i],
    i < 4 ? 'bad' : i < 8 ? 'good' : '']);
}
const td = (cls, text = '', extra = '') => `<td class="${cls}" ${extra}>${text}</td>`;
const blank = n => td('').repeat(n);
const line = (h, inner) => `<tr class="${h}">${inner}</tr>`;
let out = line('h15', blank(4) + td('brk') + blank(5) + td('brk') + blank(4));
out += line('h15', blank(4) + td('brk') + td('banner', 'Employ Data Entry for Small Projects', 'colspan="5" rowspan="3"') + td('brk') + blank(4));
out += line('h16', blank(4) + td('brk') + td('brk') + blank(4));
out += line('h20', blank(4) + td('brk') + td('brk') + blank(4));
out += line('h14', td('') + td('brick') + td('brick lowedge').repeat(2) + td('brick lowedge brk') + td('brick lowedge').repeat(5) +
  td('brick lowedge brk') + td('brick lowedge').repeat(2) + td('sel seltop') + td(''));
const heads = ['Sr#','Name','Job','Contact','Age','Salary','Home','Electricity','Fee','Total Expences','Remining Money'];
out += line('h17', td('') + td('brick rtedge') + heads.map((t, i) => td('box cap' + (i === 2 || i === 8 ? ' brk' : ''), t)).join('') + td('sel') + td(''));
people.forEach((p, i) => {
  const [name, job, age, salary, home, power, fee, spent, c1, left, c2] = p;
  out += line([2, 4].includes(i % 5) ? 'h16' : 'h17', td('') + td('brick rtedge') + td('box', i + 1) + td('box word', name) + td('box word brk', job) +
    td('box flag', '030011234567') + [age, salary, home, power].map(v => td('box', v)).join('') + td('box brk', fee) +
    td('box ' + c1 + (i ? '' : ' flag'), spent) + td('box ' + c2, left) + td('sel') + td(''));
});
out += line('h9', td('') + td('brick').repeat(3) + td('brick brk') + td('brick').repeat(5) + td('brick brk') + td('brick').repeat(2) + td('sel selend') + td(''));
document.getElementById('cells').innerHTML = out;
</script>
<script src="https://cdn.jsdelivr.net/npm/bootstrap@5.3.0/dist/js/bootstrap.bundle.min.js"></script>
</body>
</html>
